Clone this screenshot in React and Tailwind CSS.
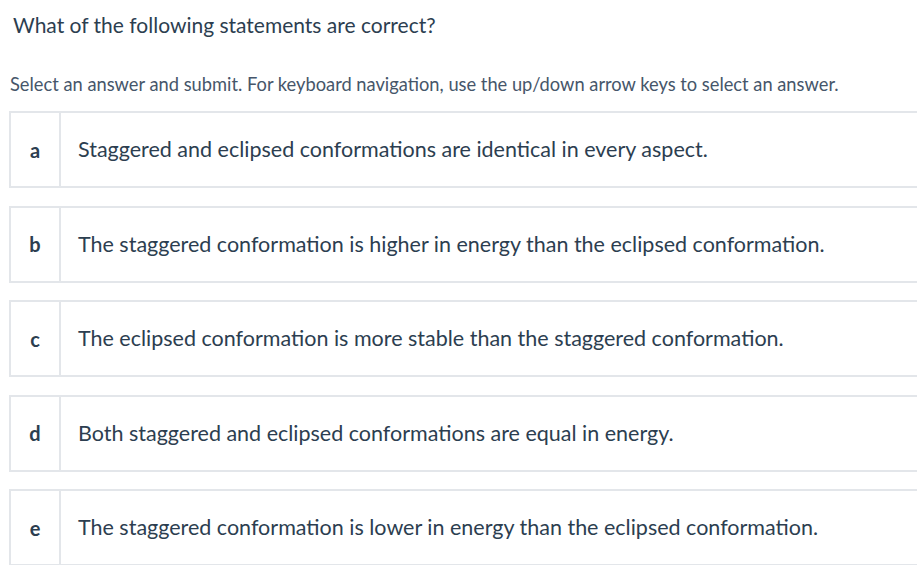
const options = [
  { key: 'a', text: 'Staggered and eclipsed conformations are identical in every aspect.' },
  { key: 'b', text: 'The staggered conformation is higher in energy than the eclipsed conformation.' },
  { key: 'c', text: 'The eclipsed conformation is more stable than the staggered conformation.' },
  { key: 'd', text: 'Both staggered and eclipsed conformations are equal in energy.' },
  { key: 'e', text: 'The staggered conformation is lower in energy than the eclipsed conformation.' },
];

export default function App() {
  return (
    <div
      className="w-[917px] h-[565px] overflow-hidden bg-white text-[#2c3e50]"
      style={{ fontFamily: 'Lato, "Noto Sans", sans-serif' }}
    >
      <h1 className="pl-[13px] pt-[11px] text-[21px] leading-[27px] font-normal">
        What of the following statements are correct?
      </h1>
      <p className="pl-[10px] mt-[35px] text-[18.3px] leading-[23px] text-[#46566a]">
        Select an answer and submit. For keyboard navigation, use the up/down arrow keys to select an answer.
      </p>
      <div className="mt-[15px] ml-[9px] w-[920px] flex flex-col gap-[17.5px]">
        {options.map((o) => (
          <div key={o.key} className="flex h-[77px] border-2 border-[#e3e6ea] bg-white">
            <div className="w-[50px] shrink-0 flex items-center justify-center border-r-2 border-[#e3e6ea] text-[20px] font-bold">
              {o.key}
            </div>
            <div className="flex items-center pl-[17px] text-[21.5px]">{o.text}</div>
          </div>
        ))}
      </div>
    </div>
  );
}
